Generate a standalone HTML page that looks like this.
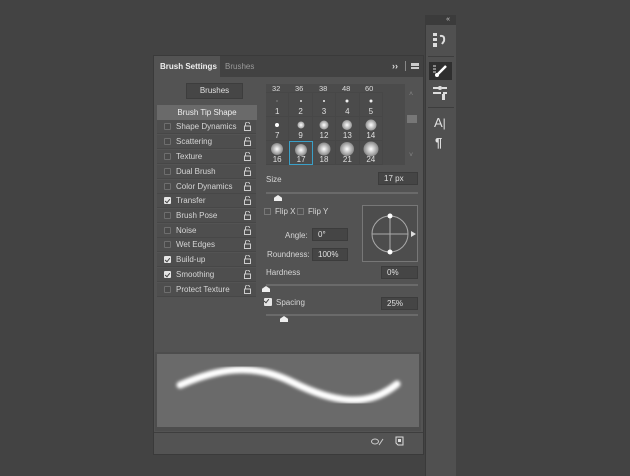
<!DOCTYPE html>
<html><head><style>
*{margin:0;padding:0;box-sizing:border-box}
body{width:630px;height:476px;background:#434343;position:relative;overflow:hidden;font-family:"Liberation Sans",sans-serif;font-size:8px;color:#d6d6d6}
.a{position:absolute}
.panel{left:153px;top:55px;width:271px;height:400px;background:#535353;border:1px solid #3a3a3a}
.row{position:absolute;left:157px;width:99px;height:14px;border-bottom:1px solid #474747;background:#4e4e4e}
.row .cb{position:absolute;left:7px;top:3px;width:7px;height:7px;border:1px solid #6e6e6e;background:#4a4a4a;border-radius:1px}
.row .cb.on{background:#e6e6e6;border-color:#e6e6e6}
.cb.on::after{content:"";position:absolute;left:1px;top:0px;width:2px;height:4px;border-right:1.2px solid #444;border-bottom:1.2px solid #444;transform:rotate(40deg)}
.row .t{position:absolute;left:19px;top:2px}
.row .l{position:absolute;left:87px;top:2px;width:7px;height:9px}
.inp{position:absolute;background:#454545;border:1px solid #3c3c3c;height:13px;padding:1px 5px;color:#e0e0e0}
.line{position:absolute;height:2px;background:#6a6a6a}
.thumb{position:absolute;width:8px;height:6px;background:#eee;clip-path:polygon(50% 0,100% 45%,100% 100%,0 100%,0 45%)}
.cell{position:absolute;width:23.4px;height:24px;border-right:1px solid #474747;border-bottom:1px solid #474747;text-align:center;color:#e0e0e0;font-size:8px}
.dot{position:absolute;left:50%;top:8px;border-radius:50%;transform:translate(-50%,-50%)}
.n{padding-top:14px}
</style></head><body>
<div class="a" style="left:425px;top:15px;width:31px;height:461px;background:#505050;border-left:1px solid #3a3a3a"></div>
<div class="a" style="left:425px;top:15px;width:31px;height:10px;background:#3b3b3b;color:#ccc;font-size:7px;text-align:right;padding-right:6px;line-height:10px">«</div>
<div class="a" style="left:428px;top:27px;width:26px;height:30px;border-bottom:1px solid #3d3d3d"></div>
<svg class="a" style="left:432px;top:32px" width="16" height="18"><rect x="1" y="1" width="4" height="3" fill="#ddd"/><rect x="1" y="6" width="4" height="3" fill="#ddd"/><rect x="1" y="11" width="4" height="4" fill="#ddd"/><path d="M8 4 Q13 3 12 9 L10 12" stroke="#ddd" stroke-width="2" fill="none"/></svg>
<div class="a" style="left:429px;top:62px;width:23px;height:18px;background:#2f2f2f"></div>
<svg class="a" style="left:431px;top:63px" width="20" height="16"><path d="M2 3h3M2 6h3M2 9h3" stroke="#ddd" stroke-width="1"/><path d="M6 12 L15 3" stroke="#fff" stroke-width="2.5"/><circle cx="6" cy="12" r="2" fill="#fff"/></svg>
<svg class="a" style="left:431px;top:85px" width="18" height="16"><path d="M2 3h6M11 3h5M2 8h8M12 8h4" stroke="#ddd" stroke-width="2"/><circle cx="9" cy="3" r="2" fill="#ddd"/><rect x="11" y="9" width="3" height="6" fill="#ddd"/></svg>
<div class="a" style="left:428px;top:107px;width:26px;height:1px;background:#3d3d3d"></div>
<div class="a" style="left:434px;top:115px;color:#e0e0e0;font-size:13px">A<span style="font-size:12px">|</span></div>
<div class="a" style="left:435px;top:135px;color:#e0e0e0;font-size:13px;font-weight:bold">¶</div>

<div class="a panel"></div>
<div class="a" style="left:154px;top:56px;width:269px;height:21px;background:#424242"></div>
<div class="a" style="left:154px;top:56px;width:66px;height:22px;background:#535353;color:#eee;padding:6px 0 0 6px;font-weight:bold">Brush Settings</div>
<div class="a" style="left:225px;top:62px;color:#9a9a9a">Brushes</div>
<div class="a" style="left:392px;top:61px;color:#ddd;font-size:9px;font-weight:bold">››</div>
<div class="a" style="left:405px;top:61px;width:1px;height:10px;background:#888"></div>
<div class="a" style="left:411px;top:63px;width:8px;height:6px;border-top:2px solid #ccc;border-bottom:2px solid #ccc"></div>
<div class="a" style="left:411px;top:65px;width:8px;height:1px;background:#ccc"></div>

<div class="a" style="left:186px;top:83px;width:57px;height:16px;background:#464646;border:1px solid #3d3d3d;color:#e0e0e0;text-align:center;line-height:14px">Brushes</div>

<div class="a" style="left:157px;top:105px;width:100px;height:15px;background:#6a6a6a;color:#eee;text-align:center;line-height:15px">Brush Tip Shape</div>
<div class="row" style="top:120px"><div class="cb"></div><div class="t">Shape Dynamics</div><svg class="l" viewBox="0 0 7 9"><path d="M1.5 4V2a2 2 0 0 1 4 0" stroke="#ccc" fill="none"/><rect x="0.5" y="4" width="6" height="4.5" stroke="#ccc" fill="none"/></svg></div>
<div class="row" style="top:135px"><div class="cb"></div><div class="t">Scattering</div><svg class="l" viewBox="0 0 7 9"><path d="M1.5 4V2a2 2 0 0 1 4 0" stroke="#ccc" fill="none"/><rect x="0.5" y="4" width="6" height="4.5" stroke="#ccc" fill="none"/></svg></div>
<div class="row" style="top:150px"><div class="cb"></div><div class="t">Texture</div><svg class="l" viewBox="0 0 7 9"><path d="M1.5 4V2a2 2 0 0 1 4 0" stroke="#ccc" fill="none"/><rect x="0.5" y="4" width="6" height="4.5" stroke="#ccc" fill="none"/></svg></div>
<div class="row" style="top:165px"><div class="cb"></div><div class="t">Dual Brush</div><svg class="l" viewBox="0 0 7 9"><path d="M1.5 4V2a2 2 0 0 1 4 0" stroke="#ccc" fill="none"/><rect x="0.5" y="4" width="6" height="4.5" stroke="#ccc" fill="none"/></svg></div>
<div class="row" style="top:180px"><div class="cb"></div><div class="t">Color Dynamics</div><svg class="l" viewBox="0 0 7 9"><path d="M1.5 4V2a2 2 0 0 1 4 0" stroke="#ccc" fill="none"/><rect x="0.5" y="4" width="6" height="4.5" stroke="#ccc" fill="none"/></svg></div>
<div class="row" style="top:194px"><div class="cb on"></div><div class="t">Transfer</div><svg class="l" viewBox="0 0 7 9"><path d="M1.5 4V2a2 2 0 0 1 4 0" stroke="#ccc" fill="none"/><rect x="0.5" y="4" width="6" height="4.5" stroke="#ccc" fill="none"/></svg></div>
<div class="row" style="top:209px"><div class="cb"></div><div class="t">Brush Pose</div><svg class="l" viewBox="0 0 7 9"><path d="M1.5 4V2a2 2 0 0 1 4 0" stroke="#ccc" fill="none"/><rect x="0.5" y="4" width="6" height="4.5" stroke="#ccc" fill="none"/></svg></div>
<div class="row" style="top:224px"><div class="cb"></div><div class="t">Noise</div><svg class="l" viewBox="0 0 7 9"><path d="M1.5 4V2a2 2 0 0 1 4 0" stroke="#ccc" fill="none"/><rect x="0.5" y="4" width="6" height="4.5" stroke="#ccc" fill="none"/></svg></div>
<div class="row" style="top:238px"><div class="cb"></div><div class="t">Wet Edges</div><svg class="l" viewBox="0 0 7 9"><path d="M1.5 4V2a2 2 0 0 1 4 0" stroke="#ccc" fill="none"/><rect x="0.5" y="4" width="6" height="4.5" stroke="#ccc" fill="none"/></svg></div>
<div class="row" style="top:253px"><div class="cb on"></div><div class="t">Build-up</div><svg class="l" viewBox="0 0 7 9"><path d="M1.5 4V2a2 2 0 0 1 4 0" stroke="#ccc" fill="none"/><rect x="0.5" y="4" width="6" height="4.5" stroke="#ccc" fill="none"/></svg></div>
<div class="row" style="top:268px"><div class="cb on"></div><div class="t">Smoothing</div><svg class="l" viewBox="0 0 7 9"><path d="M1.5 4V2a2 2 0 0 1 4 0" stroke="#ccc" fill="none"/><rect x="0.5" y="4" width="6" height="4.5" stroke="#ccc" fill="none"/></svg></div>
<div class="row" style="top:283px"><div class="cb"></div><div class="t">Protect Texture</div><svg class="l" viewBox="0 0 7 9"><path d="M1.5 4V2a2 2 0 0 1 4 0" stroke="#ccc" fill="none"/><rect x="0.5" y="4" width="6" height="4.5" stroke="#ccc" fill="none"/></svg></div>

<div class="a" style="left:266px;top:84px;width:153px;height:81px;background:#4b4b4b"></div>
<div class="a" style="left:266px;top:84px;width:117px;height:9px;border-bottom:1px solid #474747;font-size:7.5px;color:#ddd">
<span class="a" style="left:6px;top:0">32</span><span class="a" style="left:29px">36</span><span class="a" style="left:53px">38</span><span class="a" style="left:76px">48</span><span class="a" style="left:99px">60</span></div>
<div class="a" style="left:266px;top:93px">
<div class="cell" style="left:0;top:0"><div class="dot" style="width:1px;height:1px;background:#ddd"></div><div class="n">1</div></div>
<div class="cell" style="left:23.4px;top:0"><div class="dot" style="width:2px;height:2px;background:#ddd"></div><div class="n">2</div></div>
<div class="cell" style="left:46.8px;top:0"><div class="dot" style="width:2px;height:2px;background:#eee"></div><div class="n">3</div></div>
<div class="cell" style="left:70.2px;top:0"><div class="dot" style="width:3px;height:3px;background:#eee"></div><div class="n">4</div></div>
<div class="cell" style="left:93.6px;top:0"><div class="dot" style="width:3px;height:3px;background:#eee"></div><div class="n">5</div></div>
<div class="cell" style="left:0;top:24px"><div class="dot" style="width:4px;height:4px;background:#fff"></div><div class="n">7</div></div>
<div class="cell" style="left:23.4px;top:24px"><div class="dot" style="width:7px;height:7px;background:radial-gradient(#fff,#888 90%)"></div><div class="n">9</div></div>
<div class="cell" style="left:46.8px;top:24px"><div class="dot" style="width:9px;height:9px;background:radial-gradient(#fff,#777 90%)"></div><div class="n">12</div></div>
<div class="cell" style="left:70.2px;top:24px"><div class="dot" style="width:10px;height:10px;background:radial-gradient(#fff,#777 90%)"></div><div class="n">13</div></div>
<div class="cell" style="left:93.6px;top:24px"><div class="dot" style="width:11px;height:11px;background:radial-gradient(#fff,#777 90%)"></div><div class="n">14</div></div>
<div class="cell" style="left:0;top:48px"><div class="dot" style="width:12px;height:12px;background:radial-gradient(#fff,#666 90%)"></div><div class="n">16</div></div>
<div class="cell" style="left:23.4px;top:48px;border:1px solid #3aa0c8"><div class="dot" style="width:12px;height:12px;background:radial-gradient(#fff,#666 90%)"></div><div style="padding-top:13px">17</div></div>
<div class="cell" style="left:46.8px;top:48px"><div class="dot" style="width:13px;height:13px;background:radial-gradient(#fff,#666 90%)"></div><div class="n">18</div></div>
<div class="cell" style="left:70.2px;top:48px"><div class="dot" style="width:14px;height:14px;background:radial-gradient(#fff,#666 90%)"></div><div class="n">21</div></div>
<div class="cell" style="left:93.6px;top:48px"><div class="dot" style="width:15px;height:15px;background:radial-gradient(#fff,#666 90%)"></div><div class="n">24</div></div>
</div>
<div class="a" style="left:405px;top:84px;width:14px;height:81px;background:#535353"></div>
<div class="a" style="left:409px;top:91px;color:#888;font-size:7px">˄</div>
<div class="a" style="left:407px;top:115px;width:10px;height:8px;background:#777"></div>
<div class="a" style="left:409px;top:152px;color:#888;font-size:7px">˅</div>

<div class="a" style="left:266px;top:175px">Size</div>
<div class="inp" style="left:378px;top:172px;width:40px">17 px</div>
<div class="line" style="left:266px;top:192px;width:152px"></div>
<div class="thumb" style="left:274px;top:195px"></div>

<div class="a" style="left:264px;top:208px;width:7px;height:7px;border:1px solid #777"></div>
<div class="a" style="left:275px;top:207px">Flip X</div>
<div class="a" style="left:297px;top:208px;width:7px;height:7px;border:1px solid #777"></div>
<div class="a" style="left:308px;top:207px">Flip Y</div>

<div class="a" style="left:362px;top:205px;width:56px;height:57px;border:1px solid #777;background:#4d4d4d"></div>
<svg class="a" style="left:362px;top:205px" width="62" height="57"><circle cx="28" cy="29" r="18" stroke="#aaa" fill="none"/><path d="M28 11V47M10 29H46" stroke="#aaa"/><circle cx="28" cy="11" r="2.5" fill="#fff"/><circle cx="28" cy="47" r="2.5" fill="#fff"/><path d="M49 26L54 29L49 32Z" fill="#ddd"/></svg>

<div class="a" style="left:285px;top:231px">Angle:</div>
<div class="inp" style="left:312px;top:228px;width:36px">0°</div>
<div class="a" style="left:267px;top:250px">Roundness:</div>
<div class="inp" style="left:312px;top:248px;width:36px">100%</div>

<div class="a" style="left:266px;top:268px">Hardness</div>
<div class="inp" style="left:381px;top:266px;width:37px">0%</div>
<div class="line" style="left:266px;top:284px;width:152px"></div>
<div class="thumb" style="left:262px;top:286px"></div>

<div class="a cb on" style="left:264px;top:298px;width:8px;height:8px;background:#e6e6e6;border-radius:1px"></div>
<div class="a" style="left:276px;top:298px">Spacing</div>
<div class="inp" style="left:381px;top:297px;width:37px">25%</div>
<div class="line" style="left:266px;top:314px;width:152px"></div>
<div class="thumb" style="left:280px;top:316px"></div>

<div class="a" style="left:155px;top:352px;width:266px;height:79px;background:#4d4d4d"></div>
<div class="a" style="left:157px;top:354px;width:262px;height:73px;background:#6a6a6a"></div>
<svg class="a" style="left:157px;top:354px" width="262" height="73"><defs><filter id="b"><feGaussianBlur stdDeviation="1.6"/></filter></defs>
<path d="M23 31 C60 15,95 8,135 28 S210 55,240 30" stroke="#fff" stroke-width="7" fill="none" stroke-linecap="round" filter="url(#b)"/></svg>
<div class="a" style="left:154px;top:432px;width:269px;height:1px;background:#3e3e3e"></div>
<svg class="a" style="left:370px;top:437px" width="14" height="9"><ellipse cx="5" cy="4.5" rx="3.5" ry="2.5" stroke="#ccc" fill="none"/><path d="M9 8L13 2" stroke="#ccc"/></svg>
<svg class="a" style="left:395px;top:436px" width="10" height="10"><path d="M1 1H8V9H3L1 7Z" stroke="#ddd" fill="none"/><rect x="3" y="3" width="3" height="3" fill="#ddd"/></svg>
</body></html>
